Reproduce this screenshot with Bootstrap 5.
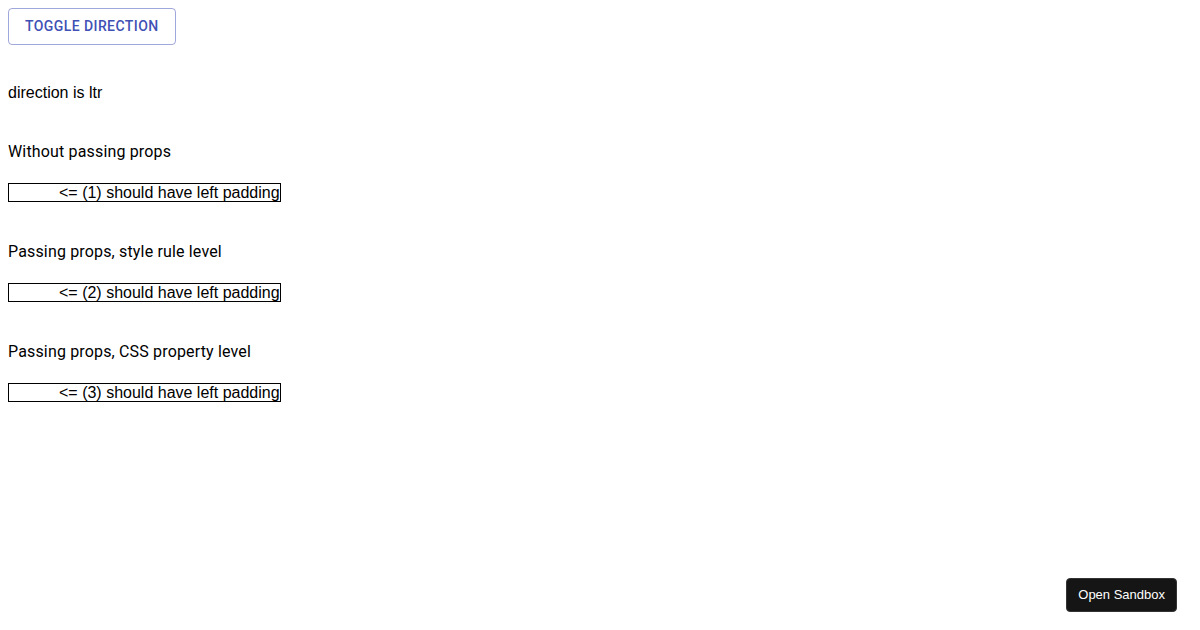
<!DOCTYPE html>
<html lang="en" dir="ltr">
<head>
  <meta charset="UTF-8">
  <meta name="viewport" content="width=device-width, initial-scale=1">
  <title>Toggle direction</title>
  <link href="https://cdn.jsdelivr.net/npm/bootstrap@5.3.0/dist/css/bootstrap.min.css" rel="stylesheet">
  <style>
    body {
      font-family: "Liberation Sans", Arial, sans-serif;
      font-size: 16px;
      line-height: 18px;
      color: #000;
      background-color: #fff;
    }

    .btn-toggle {
      --bs-btn-color: #3f51b5;
      --bs-btn-border-color: rgba(63, 81, 181, 0.5);
      --bs-btn-hover-color: #3f51b5;
      --bs-btn-hover-bg: rgba(63, 81, 181, 0.04);
      --bs-btn-hover-border-color: #3f51b5;
      --bs-btn-padding-x: 16px;
      --bs-btn-padding-y: 5px;
      --bs-btn-font-family: Roboto, sans-serif;
      --bs-btn-font-size: 14px;
      --bs-btn-font-weight: 500;
      --bs-btn-line-height: 25px;
      --bs-btn-border-radius: 4px;
      letter-spacing: 0.03em;
    }

    .direction-text {
      margin: 39px 0 36px;
    }

    .demo-section {
      margin-bottom: 36px;
    }

    .demo-title {
      margin-bottom: 17px;
      font-family: Roboto, sans-serif;
      font-size: 16px;
      font-weight: 400;
      line-height: 28px;
      letter-spacing: 0.01em;
    }

    .padded-box {
      padding-left: 50px;
      border: 1px solid #000;
      line-height: 17px;
    }

    .btn-sandbox {
      --bs-btn-color: #fff;
      --bs-btn-bg: #151515;
      --bs-btn-border-color: #343434;
      --bs-btn-hover-color: #fff;
      --bs-btn-hover-bg: #252525;
      --bs-btn-padding-x: 11px;
      --bs-btn-padding-y: 7px;
      --bs-btn-font-size: 13px;
      --bs-btn-line-height: 18px;
      --bs-btn-border-radius: 4px;
      position: fixed;
      right: 23px;
      bottom: 18px;
    }
  </style>
</head>
<body>
  <main class="p-2">
    <button type="button" class="btn btn-toggle text-uppercase d-block" id="toggle-direction">Toggle direction</button>
    <p class="direction-text">direction is <span id="direction">ltr</span></p>

    <section class="demo-section">
      <h6 class="demo-title">Without passing props</h6>
      <div class="d-flex">
        <div class="padded-box">&lt;= (1) should have left padding</div>
      </div>
    </section>
    <section class="demo-section">
      <h6 class="demo-title">Passing props, style rule level</h6>
      <div class="d-flex">
        <div class="padded-box">&lt;= (2) should have left padding</div>
      </div>
    </section>
    <section class="demo-section">
      <h6 class="demo-title">Passing props, CSS property level</h6>
      <div class="d-flex">
        <div class="padded-box">&lt;= (3) should have left padding</div>
      </div>
    </section>
  </main>

  <button type="button" class="btn btn-sandbox">Open Sandbox</button>

  <script src="https://cdn.jsdelivr.net/npm/bootstrap@5.3.0/dist/js/bootstrap.bundle.min.js"></script>
  <script>
    document.getElementById("toggle-direction").addEventListener("click", function () {
      const root = document.documentElement;
      root.dir = root.dir === "ltr" ? "rtl" : "ltr";
      document.getElementById("direction").textContent = root.dir;
    });
  </script>
</body>
</html>
